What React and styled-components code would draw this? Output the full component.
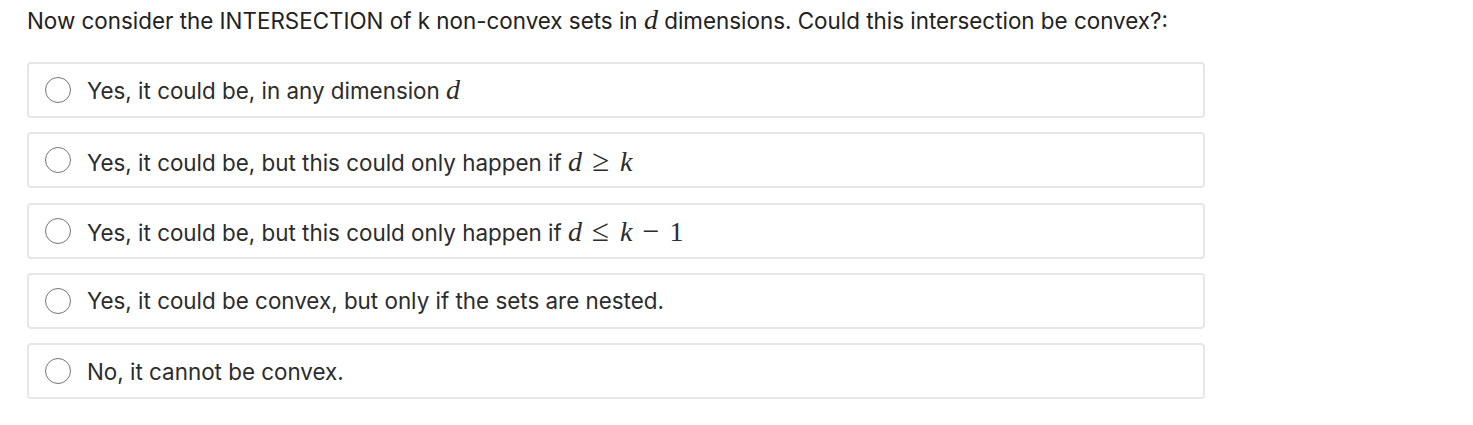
import React, { useState } from 'react';
import styled, { createGlobalStyle } from 'styled-components';

const GlobalStyle = createGlobalStyle`
	body {
		margin: 0;
		background: #fff;
		font-family: Inter, "Noto Sans", sans-serif;
		color: #1f1f1f;
	}
`;

const Page = styled.div`
	padding: 6px 268px 0 27px;
`;

const Question = styled.div`
	font-size: 22.4px;
	line-height: 30px;
	color: #222;
	margin-bottom: 26px;
`;

const Options = styled.div`
	display: flex;
	flex-direction: column;
	gap: 14.25px;
`;

const Option = styled.label`
	display: flex;
	align-items: center;
	height: 56px;
	box-sizing: border-box;
	padding: 0 0 0 16px;
	border: 2px solid #e6e6e6;
	border-radius: 4px;
	font-size: 22.4px;
	color: #2c2c2c;
	cursor: pointer;
`;

const Radio = styled.span`
	width: 26px;
	height: 26px;
	box-sizing: border-box;
	border-radius: 50%;
	border: 1.5px solid #757575;
	margin-right: 16px;
	flex-shrink: 0;
	background: ${(p) => (p.checked ? 'radial-gradient(#2f6fd6 45%, #fff 50%)' : '#fff')};
`;

const M = styled.span`
	font-family: "Liberation Serif", "DejaVu Serif", serif;
	font-style: ${(p) => (p.upright ? 'normal' : 'italic')};
	font-size: ${(p) => p.size || 28}px;
	line-height: 1;
	margin-left: ${(p) => p.gap || 0}px;
`;

const options = [
	<>Yes, it could be, in any dimension <M>d</M></>,
	<>
		Yes, it could be, but this could only happen if <M>d</M>
		<M upright size={31} gap={10}>≥</M>
		<M gap={11}>k</M>
	</>,
	<>
		Yes, it could be, but this could only happen if <M>d</M>
		<M upright size={31} gap={10}>≤</M>
		<M gap={11}>k</M>
		<M upright size={30} gap={10}>−</M>
		<M upright gap={10}>1</M>
	</>,
	<>Yes, it could be convex, but only if the sets are nested.</>,
	<>No, it cannot be convex.</>,
];

export default function App() {
	const [choice, setChoice] = useState(null);
	return (
		<Page>
			<GlobalStyle />
			<Question>
				Now consider the INTERSECTION of k non-convex sets in <M>d</M> dimensions. Could this intersection be convex?:
			</Question>
			<Options>
				{options.map((text, i) => (
					<Option key={i} onClick={() => setChoice(i)}>
						<Radio checked={choice === i} />
						<span>{text}</span>
					</Option>
				))}
			</Options>
		</Page>
	);
}
